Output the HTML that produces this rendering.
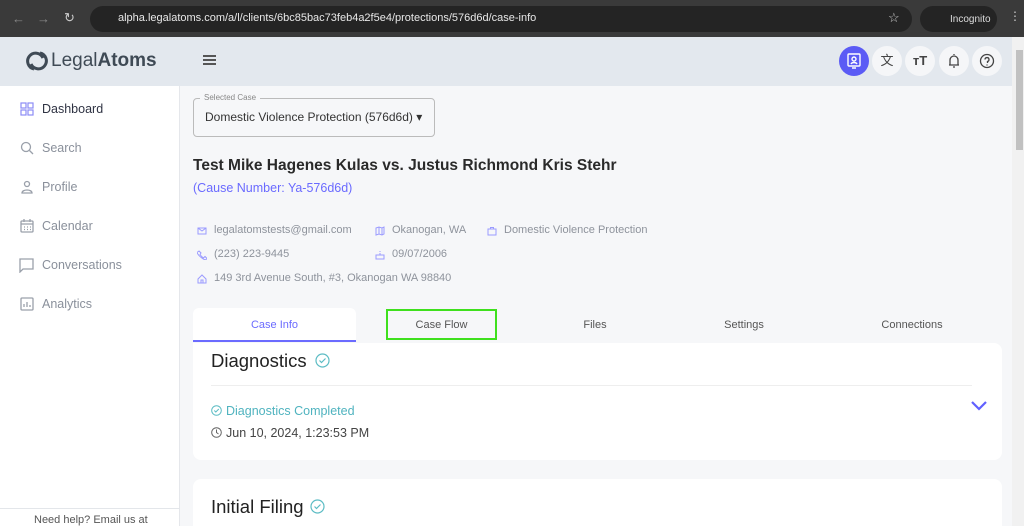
<!DOCTYPE html>
<html style="overflow:hidden;height:526px"><head><meta charset="utf-8"><style>
*{box-sizing:border-box;margin:0;padding:0}
body{width:1024px;height:526px;overflow:hidden;font-family:"Liberation Sans",sans-serif;background:#f6f7f9;position:relative}
.a{position:absolute}
.chrome{left:0;top:0;width:1024px;height:37px;background:#3a3a3a}
.pill{left:90px;top:6px;width:822px;height:26px;border-radius:13px;background:#242424}
.url{left:118px;top:12px;font-size:11px;color:#e8e8e8}
.inc{left:920px;top:6px;width:77px;height:26px;border-radius:13px;background:#242424;color:#ddd;font-size:10px;padding:8px 0 0 30px}
.hdr{left:0;top:37px;width:1012px;height:49px;background:#e3e8ee}
.side{left:0;top:86px;width:180px;height:440px;background:#fff;border-right:1px solid #e5e7eb}
.nav{left:42px;font-size:12.5px;color:#8a909b}
.circ{top:46px;width:30px;height:30px;border-radius:50%;background:#f5f6f8;color:#444;font-size:13px;text-align:center;line-height:30px}
.info{font-size:11px;color:#8e939c}
.tab{top:308px;height:34px;font-size:11px;color:#555;text-align:center;line-height:34px}
.card{background:#fff;border-radius:8px;left:193px;width:809px}
svg{display:block}
</style></head><body>
<div class="a chrome"></div>
<div class="a" style="left:12px;top:11px;color:#888;font-size:13px">←</div>
<div class="a" style="left:37px;top:11px;color:#888;font-size:13px">→</div>
<div class="a" style="left:64px;top:10px;color:#ccc;font-size:13px">↻</div>
<div class="a pill"></div>
<div class="a url">alpha.legalatoms.com/a/l/clients/6bc85bac73feb4a2f5e4/protections/576d6d/case-info</div>
<div class="a" style="left:888px;top:10px;color:#ccc;font-size:13px">☆</div>
<div class="a inc">Incognito</div>
<div class="a" style="left:1009px;top:9px;color:#ccc;font-size:12px">⋮</div>
<div class="a hdr"></div>
<div class="a" style="left:1012px;top:37px;width:12px;height:489px;background:#f1f1f1"></div>
<div class="a" style="left:1016px;top:50px;width:7px;height:100px;background:#c1c1c1"></div>
<svg class="a" style="left:26px;top:50px" width="22" height="22" viewBox="0 0 22 22"><path d="M8 19A8 8 0 1 1 17 8" stroke="#3f4a55" stroke-width="3" fill="none"/><path d="M14 3A8 8 0 1 1 5 14" stroke="#3f4a55" stroke-width="3" fill="none"/></svg>
<div class="a" style="left:51px;top:50px;font-size:19px;color:#3f4a55">Legal<b>Atoms</b></div>
<div class="a" style="left:203px;top:55px;width:13px;height:2px;background:#555;box-shadow:0 4px 0 #555,0 8px 0 #555"></div>
<div class="a circ" style="left:839px;background:#5b5bf5"><svg style="margin:7px" width="16" height="16" viewBox="0 0 16 16" fill="none" stroke="#fff" stroke-width="1.4"><rect x="2" y="1" width="12" height="12" rx="1"/><circle cx="8" cy="6" r="2"/><path d="M5 11c1-2 5-2 6 0M6 15h4"/></svg></div>
<div class="a circ" style="left:872px">文</div>
<div class="a circ" style="left:905px;font-weight:bold">тT</div>
<div class="a circ" style="left:939px"><svg style="margin:7px" width="16" height="16" viewBox="0 0 16 16" fill="none" stroke="#444" stroke-width="1.3"><path d="M4 12V7a4 4 0 0 1 8 0v5H3h10M7 14h2M8 2V1"/></svg></div>
<div class="a circ" style="left:972px"><svg style="margin:7px" width="16" height="16" viewBox="0 0 16 16" fill="none" stroke="#444" stroke-width="1.3"><circle cx="8" cy="8" r="6.5"/><path d="M6 6.5a2 2 0 1 1 2.5 2v1.5M8 11.5v1"/></svg></div>
<div class="a side"></div>
<svg class="a" style="left:20px;top:102px" width="14" height="14" viewBox="0 0 14 14" fill="none" stroke="#8b8bf5" stroke-width="1.2"><rect x="1" y="1" width="5" height="5"/><rect x="8" y="1" width="5" height="5"/><rect x="1" y="8" width="5" height="5"/><rect x="8" y="8" width="5" height="5"/></svg>
<div class="a nav" style="top:102px;color:#2f3343">Dashboard</div>
<svg class="a" style="left:20px;top:141px" width="14" height="14" viewBox="0 0 14 14" fill="none" stroke="#9aa0aa" stroke-width="1.3"><circle cx="6" cy="6" r="4.5"/><path d="M9.5 9.5L13 13"/></svg>
<div class="a nav" style="top:141px">Search</div>
<svg class="a" style="left:20px;top:180px" width="14" height="14" viewBox="0 0 14 14" fill="none" stroke="#9aa0aa" stroke-width="1.3"><circle cx="7" cy="4" r="2.5"/><path d="M2 13c0-4 10-4 10 0z"/></svg>
<div class="a nav" style="top:180px">Profile</div>
<svg class="a" style="left:20px;top:219px" width="14" height="14" viewBox="0 0 14 14" fill="none" stroke="#9aa0aa" stroke-width="1.3"><rect x="1" y="2" width="12" height="11" rx="1"/><path d="M1 5h12M4 0v3M10 0v3M4 8h1M7 8h1M10 8h1M4 10.5h1M7 10.5h1M10 10.5h1"/></svg>
<div class="a nav" style="top:219px">Calendar</div>
<svg class="a" style="left:19px;top:258px" width="15" height="15" viewBox="0 0 15 15" fill="none" stroke="#9aa0aa" stroke-width="1.3"><path d="M1 1h13v10H4l-3 3z"/></svg>
<div class="a nav" style="top:258px">Conversations</div>
<svg class="a" style="left:20px;top:297px" width="14" height="14" viewBox="0 0 14 14" fill="none" stroke="#9aa0aa" stroke-width="1.3"><rect x="1" y="1" width="12" height="12" rx="1"/><path d="M4 10V7M7 10V5M10 10V8"/></svg>
<div class="a nav" style="top:297px">Analytics</div>
<div class="a" style="left:0;top:508px;width:180px;border-top:1px solid #e3e6ea"></div>
<div class="a" style="left:34px;top:514px;font-size:11px;color:#555">Need help? Email us at</div>
<div class="a" style="left:193px;top:98px;width:242px;height:39px;border:1px solid #bbb;border-radius:4px"></div>
<div class="a" style="left:200px;top:93px;background:#f6f7f9;padding:0 4px;font-size:8px;color:#888">Selected Case</div>
<div class="a" style="left:205px;top:110px;font-size:12px;color:#333">Domestic Violence Protection (576d6d) ▾</div>
<div class="a" style="left:193px;top:157px;font-size:15.5px;font-weight:bold;color:#2a2a2a">Test Mike Hagenes Kulas vs. Justus Richmond Kris Stehr</div>
<div class="a" style="left:193px;top:181px;font-size:12.5px;color:#6a6aff">(Cause Number: Ya-576d6d)</div>
<svg class="a" style="left:197px;top:226px" width="10" height="10" viewBox="0 0 10 10" fill="none" stroke="#9b9bff"><rect x="1" y="2" width="8" height="6"/><path d="M1 2l4 3 4-3"/></svg>
<div class="a info" style="left:214px;top:224px">legalatomstests@gmail.com</div>
<svg class="a" style="left:375px;top:226px" width="10" height="10" viewBox="0 0 10 10" fill="none" stroke="#9b9bff"><path d="M1 2l3-1 3 1 2-1v7l-2 1-3-1-3 1zM4 1v7M7 2v7"/></svg>
<div class="a info" style="left:392px;top:224px">Okanogan, WA</div>
<svg class="a" style="left:487px;top:226px" width="10" height="10" viewBox="0 0 10 10" fill="none" stroke="#9b9bff"><rect x="1" y="3" width="8" height="6"/><path d="M3.5 3V1.5h3V3"/></svg>
<div class="a info" style="left:504px;top:224px">Domestic Violence Protection</div>
<svg class="a" style="left:197px;top:250px" width="10" height="10" viewBox="0 0 10 10" fill="none" stroke="#9b9bff"><path d="M2 1l2 2-1 1.5c1 1.5 2 2.5 3.5 3.5L8 6.5l2 2L8.5 10C5 9 1 5 0 2.5z"/></svg>
<div class="a info" style="left:214px;top:248px">(223) 223-9445</div>
<svg class="a" style="left:375px;top:250px" width="10" height="10" viewBox="0 0 10 10" fill="none" stroke="#9b9bff"><rect x="1" y="5" width="8" height="4"/><path d="M5 5V3M5 2V1"/></svg>
<div class="a info" style="left:392px;top:248px">09/07/2006</div>
<svg class="a" style="left:197px;top:274px" width="10" height="10" viewBox="0 0 10 10" fill="none" stroke="#9b9bff"><path d="M1 5l4-4 4 4v4H1zM4 9V6h2v3"/></svg>
<div class="a info" style="left:214px;top:272px">149 3rd Avenue South, #3, Okanogan WA 98840</div>
<div class="a tab" style="left:193px;width:163px;background:#fff;border-radius:6px 6px 0 0;border-bottom:2px solid #6b6bff;color:#6b6bff">Case Info</div>
<div class="a tab" style="left:386px;width:111px;top:309px;height:31px;line-height:28px;border:2px solid #3fe01e">Case Flow</div>
<div class="a tab" style="left:545px;width:100px">Files</div>
<div class="a tab" style="left:694px;width:100px">Settings</div>
<div class="a tab" style="left:862px;width:100px">Connections</div>
<div class="a card" style="top:343px;height:117px;border-radius:0 8px 8px 8px"></div>
<div class="a" style="left:211px;top:350px;font-size:18.5px;color:#222">Diagnostics</div>
<svg class="a" style="left:315px;top:353px" width="15" height="15" viewBox="0 0 15 15" fill="none" stroke="#5cbcc4" stroke-width="1.2"><circle cx="7.5" cy="7.5" r="6.5"/><path d="M4.5 7.5l2 2 4-4"/></svg>
<div class="a" style="left:211px;top:385px;width:761px;border-top:1px solid #eee"></div>
<svg class="a" style="left:211px;top:405px" width="11" height="11" viewBox="0 0 11 11" fill="none" stroke="#5cbcc4"><circle cx="5.5" cy="5.5" r="4.8"/><path d="M3.3 5.5l1.5 1.5 3-3"/></svg>
<div class="a" style="left:226px;top:404px;font-size:12.5px;color:#4fb3bf">Diagnostics Completed</div>
<svg class="a" style="left:211px;top:427px" width="11" height="11" viewBox="0 0 11 11" fill="none" stroke="#666"><circle cx="5.5" cy="5.5" r="4.8"/><path d="M5.5 2.5v3l2 1.5"/></svg>
<div class="a" style="left:226px;top:426px;font-size:12.5px;color:#444">Jun 10, 2024, 1:23:53 PM</div>
<svg class="a" style="left:970px;top:400px" width="18" height="12"><path d="M2 2l7 7 7-7" stroke="#6060ff" stroke-width="2.2" fill="none"/></svg>
<div class="a card" style="top:479px;height:60px"></div>
<div class="a" style="left:211px;top:496px;font-size:18.5px;color:#222">Initial Filing</div>
<svg class="a" style="left:310px;top:499px" width="15" height="15" viewBox="0 0 15 15" fill="none" stroke="#5cbcc4" stroke-width="1.2"><circle cx="7.5" cy="7.5" r="6.5"/><path d="M4.5 7.5l2 2 4-4"/></svg>
</body></html>
